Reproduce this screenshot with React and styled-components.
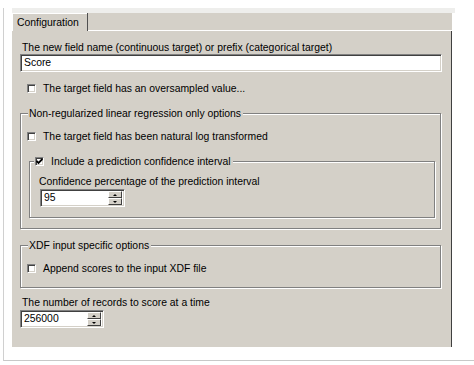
import React from "react";
import styled, { createGlobalStyle } from "styled-components";

const GlobalStyle = createGlobalStyle`
  html, body { margin: 0; padding: 0; background: #ffffff; }
  body {
    font-family: "Liberation Sans", Arial, sans-serif;
    font-size: 10.4px;
    color: #000000;
  }
  * { box-sizing: border-box; }
`;

const Frame = styled.div`
  margin: 8px 0 0 3px;
  width: 471px;
  height: 353px;
  border-left: 1px solid #d0d0d0;
  border-bottom: 1px solid #c8c8c8;
  padding-left: 8px;
  display: flex;
  flex-direction: column;
`;

const TopBand = styled.div`
  width: 443px;
  height: 5px;
  background: #eeeeec;
`;

const TabControl = styled.div`
  width: 440px;
  height: 334px;
  background: #d4d0c8;
  display: flex;
  flex-direction: column;
`;

const TabStrip = styled.div`
  display: flex;
  height: 18px;
`;

const Tab = styled.div`
  width: 76px;
  height: 18px;
  padding-left: 5px;
  padding-top: 1px;
  line-height: 18px;
  border-right: 1px solid #505050;
  box-shadow: inset 1px 1px 0 #ffffff;
  white-space: nowrap;
`;

const TabFill = styled.div`
  flex: 1;
  border-bottom: 1px solid #ffffff;
`;

const Body = styled.div`
  flex: 1;
  border-right: 1px solid #404040;
  display: flex;
  flex-direction: column;
  align-items: flex-start;
`;

const Label = styled.div`
  line-height: 13px;
  height: 13px;
  white-space: nowrap;
  margin-top: ${(p) => p.$top || 0}px;
  margin-left: ${(p) => p.$left || 0}px;
`;

const Sunken = styled.div`
  background: #ffffff;
  border-top: 1px solid #808080;
  border-left: 1px solid #808080;
  border-right: 1px solid #ffffff;
  border-bottom: 1px solid #ffffff;
  box-shadow: inset 1px 1px 0 #404040, inset -1px -1px 0 #d4d0c8;
`;

const TextBox = styled(Sunken)`
  width: ${(p) => p.$width}px;
  height: 18px;
  margin-top: ${(p) => p.$top || 0}px;
  margin-left: ${(p) => p.$left || 0}px;
  padding-left: 3px;
  line-height: 16px;
  display: flex;
  align-items: center;
`;

const SpinBox = styled(TextBox)`
  padding-right: 2px;
  justify-content: space-between;
`;

const SpinButtons = styled.div`
  width: 14px;
  height: 14px;
  display: flex;
  flex-direction: column;
`;

const SpinButton = styled.div`
  flex: 1;
  background: #d4d0c8;
  border-top: 1px solid #ffffff;
  border-left: 1px solid #ffffff;
  border-right: 1px solid #404040;
  border-bottom: 1px solid #404040;
  display: flex;
  align-items: center;
  justify-content: center;
`;

const Arrow = styled.div`
  width: 0;
  height: 0;
  border-left: 2px solid transparent;
  border-right: 2px solid transparent;
  ${(p) =>
    p.$down
      ? "border-top: 2px solid #000;"
      : "border-bottom: 2px solid #000;"}
`;

const CheckRow = styled.div`
  display: flex;
  align-items: center;
  height: 13px;
  margin-top: ${(p) => p.$top || 0}px;
  margin-left: ${(p) => p.$left || 0}px;
  white-space: nowrap;
`;

const Box = styled(Sunken)`
  width: 9px;
  height: 9px;
  margin-right: 7px;
  display: flex;
  align-items: center;
  justify-content: center;
  flex-shrink: 0;
`;

const Group = styled.div`
  width: ${(p) => p.$width}px;
  margin-top: ${(p) => p.$top || 0}px;
  margin-left: ${(p) => p.$left || 0}px;
  padding-bottom: ${(p) => p.$bottom || 0}px;
  border: 1px solid #808080;
  box-shadow: 1px 1px 0 #ffffff, inset 1px 1px 0 #ffffff;
  display: flex;
  flex-direction: column;
  align-items: flex-start;
`;

const Legend = styled.div`
  display: flex;
  align-items: center;
  height: 13px;
  line-height: 13px;
  margin-top: -7px;
  margin-left: ${(p) => p.$left || 0}px;
  padding: 0 2px 0 1px;
  background: #d4d0c8;
  white-space: nowrap;
`;

function Spin({ value, width, top, left }) {
  return (
    <SpinBox $width={width} $top={top} $left={left}>
      <span>{value}</span>
      <SpinButtons>
        <SpinButton>
          <Arrow />
        </SpinButton>
        <SpinButton>
          <Arrow $down />
        </SpinButton>
      </SpinButtons>
    </SpinBox>
  );
}

function Check({ checked }) {
  return (
    <Box>
      {checked && (
        <svg width="7" height="7" viewBox="0 0 7 7">
          <path d="M0.5 3 L2.5 5 L6.5 1" stroke="#000" strokeWidth="1.8" fill="none" />
        </svg>
      )}
    </Box>
  );
}

export default function App() {
  return (
    <>
      <GlobalStyle />
      <Frame>
        <TopBand />
        <TabControl>
          <TabStrip>
            <Tab>Configuration</Tab>
            <TabFill />
          </TabStrip>
          <Body>
            <Label $top={10} $left={10}>
              The new field name (continuous target) or prefix (categorical target)
            </Label>
            <TextBox $width={422} $left={8}>Score</TextBox>
            <CheckRow $top={10} $left={15}>
              <Check />
              The target field has an oversampled value...
            </CheckRow>

            <Group $width={421} $top={18} $left={8} $bottom={10}>
              <Legend $left={7}>Non-regularized linear regression only options</Legend>
              <CheckRow $top={10} $left={6}>
                <Check />
                The target field has been natural log transformed
              </CheckRow>
              <Group $width={406} $top={18} $left={8} $bottom={10}>
                <Legend $left={4}>
                  <Check checked />
                  Include a prediction confidence interval
                </Legend>
                <Label $top={7} $left={9}>
                  Confidence percentage of the prediction interval
                </Label>
                <Spin value="95" width={85} top={1} left={10} />
              </Group>
            </Group>

            <Group $width={421} $top={16} $left={8} $bottom={12}>
              <Legend $left={7}>XDF input specific options</Legend>
              <CheckRow $top={10} $left={6}>
                <Check />
                Append scores to the input XDF file
              </CheckRow>
            </Group>

            <Label $top={8} $left={10}>
              The number of records to score at a time
            </Label>
            <Spin value="256000" width={84} top={1} left={8} />
          </Body>
        </TabControl>
      </Frame>
    </>
  );
}
